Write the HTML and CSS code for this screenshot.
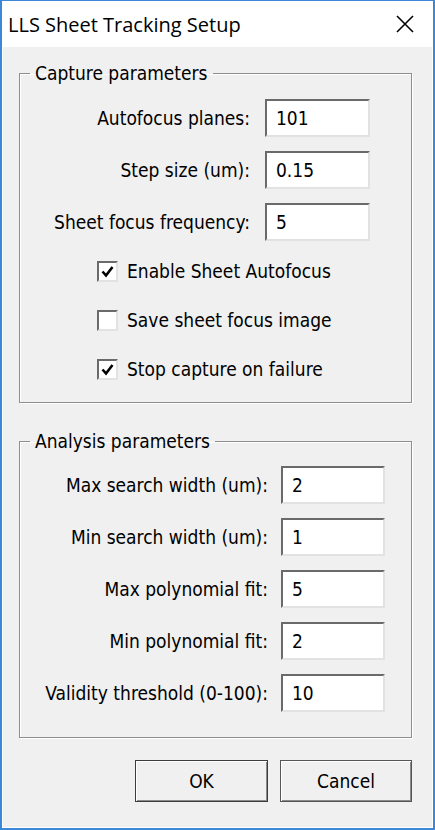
FILE: index.html
```html
<!DOCTYPE html>
<html>
<head>
<meta charset="utf-8">
<title>LLS Sheet Tracking Setup</title>
<link rel="stylesheet" href="styles.css">
</head>
<body>
<div class="window">
  <div class="titlebar">
    <span class="title">LLS Sheet Tracking Setup</span>
    <svg class="close" width="20" height="20" viewBox="0 0 20 20"><path d="M2 2 L18 18 M18 2 L2 18" stroke="#000" stroke-width="1.6" fill="none"/></svg>
  </div>
  <div class="client">
    <fieldset class="group group-capture">
      <legend>Capture parameters</legend>
      <div class="form form-capture">
        <label class="lbl">Autofocus planes:</label><input class="field" type="text" value="101">
        <label class="lbl">Step size (um):</label><input class="field" type="text" value="0.15">
        <label class="lbl">Sheet focus frequency:</label><input class="field" type="text" value="5">
      </div>
      <div class="checks">
        <div class="check-row"><span class="box"><svg viewBox="0 0 17 17" width="17" height="17"><path d="M3.5 8.5 L7 12.5 L13.5 4" stroke="#000" stroke-width="2.6" fill="none"/></svg></span><span class="check-text">Enable Sheet Autofocus</span></div>
        <div class="check-row"><span class="box"></span><span class="check-text">Save sheet focus image</span></div>
        <div class="check-row"><span class="box"><svg viewBox="0 0 17 17" width="17" height="17"><path d="M3.5 8.5 L7 12.5 L13.5 4" stroke="#000" stroke-width="2.6" fill="none"/></svg></span><span class="check-text">Stop capture on failure</span></div>
      </div>
    </fieldset>
    <fieldset class="group group-analysis">
      <legend>Analysis parameters</legend>
      <div class="form form-analysis">
        <label class="lbl">Max search width (um):</label><input class="field" type="text" value="2">
        <label class="lbl">Min search width (um):</label><input class="field" type="text" value="1">
        <label class="lbl">Max polynomial fit:</label><input class="field" type="text" value="5">
        <label class="lbl">Min polynomial fit:</label><input class="field" type="text" value="2">
        <label class="lbl">Validity threshold (0-100):</label><input class="field" type="text" value="10">
      </div>
    </fieldset>
    <div class="buttons">
      <button class="btn btn-ok">OK</button>
      <button class="btn btn-cancel">Cancel</button>
    </div>
  </div>
</div>
</body>
</html>
```

FILE: styles.css
```css
html, body {
  margin: 0;
  padding: 0;
  background: #ffffff;
}

.window {
  width: 435px;
  height: 830px;
  box-sizing: border-box;
  border: 2px solid #3b87d8;
  border-top-width: 1px;
  display: flex;
  flex-direction: column;
  font-family: "DejaVu Sans Condensed", "DejaVu Sans", sans-serif;
  font-stretch: condensed;
  font-size: 19px;
  color: #000;
}

.titlebar {
  height: 46px;
  flex: 0 0 46px;
  background: #ffffff;
  display: flex;
  align-items: center;
  justify-content: space-between;
  padding: 0 18px 0 6px;
}

.title {
  font-family: "Open Sans", "Noto Sans", sans-serif;
  font-stretch: normal;
  font-size: 20px;
  color: #000;
}

.close {
  display: block;
}

.client {
  flex: 1;
  background: #f0f0f0;
  border: 1px solid #ffffff;
  border-top: 0;
  padding: 15px 0 0 16px;
}

.group {
  box-sizing: border-box;
  width: 393px;
  margin: 0;
  border: 1px solid #8e8e8e;
  box-shadow: 1px 1px 0 #ffffff, inset 1px 1px 0 #ffffff;
  padding: 15px 0 22px 0;
}

.group legend {
  margin-left: 10px;
  padding: 0 5px;
  line-height: 22px;
}

.group-analysis {
  margin-top: 27px;
  padding: 14px 0 25px 0;
}

.form {
  display: grid;
  row-gap: 14px;
  align-items: center;
}

.form-capture {
  grid-template-columns: 230px 105px;
  column-gap: 15px;
}

.form-analysis {
  grid-template-columns: 248px 104px;
  column-gap: 13px;
}

.lbl {
  text-align: right;
  white-space: nowrap;
}

.field {
  box-sizing: border-box;
  height: 38px;
  width: 100%;
  margin: 0;
  padding: 0 0 0 9px;
  border: 2px solid;
  border-color: #6a6a6a #e2e2e2 #e2e2e2 #6a6a6a;
  background: #ffffff;
  font-family: "DejaVu Sans Condensed", "DejaVu Sans", sans-serif;
  font-stretch: condensed;
  font-size: 19px;
  color: #000;
  outline: none;
}

.checks {
  display: flex;
  flex-direction: column;
  gap: 27px;
  margin-top: 19px;
  padding-left: 77px;
}

.check-row {
  display: flex;
  align-items: center;
  height: 22px;
  gap: 9px;
}

.box {
  box-sizing: border-box;
  width: 21px;
  height: 21px;
  border: 2px solid;
  border-color: #6a6a6a #e2e2e2 #e2e2e2 #6a6a6a;
  background: #ffffff;
  display: flex;
  align-items: center;
  justify-content: center;
}

.box svg {
  display: block;
}

.buttons {
  width: 393px;
  display: flex;
  justify-content: flex-end;
  gap: 12px;
  margin-top: 22px;
}

.btn {
  box-sizing: border-box;
  height: 42px;
  margin: 0;
  padding: 0;
  border: 1px solid #555555;
  box-shadow: inset 1px 1px 0 #ffffff, inset -1px -1px 0 #8a8a8a;
  background: #f0f0f0;
  font-family: "DejaVu Sans Condensed", "DejaVu Sans", sans-serif;
  font-stretch: condensed;
  font-size: 19px;
  color: #000;
}

.btn-ok {
  width: 133px;
  border-color: #3c3c3c;
}

.btn-cancel {
  width: 132px;
}
```
